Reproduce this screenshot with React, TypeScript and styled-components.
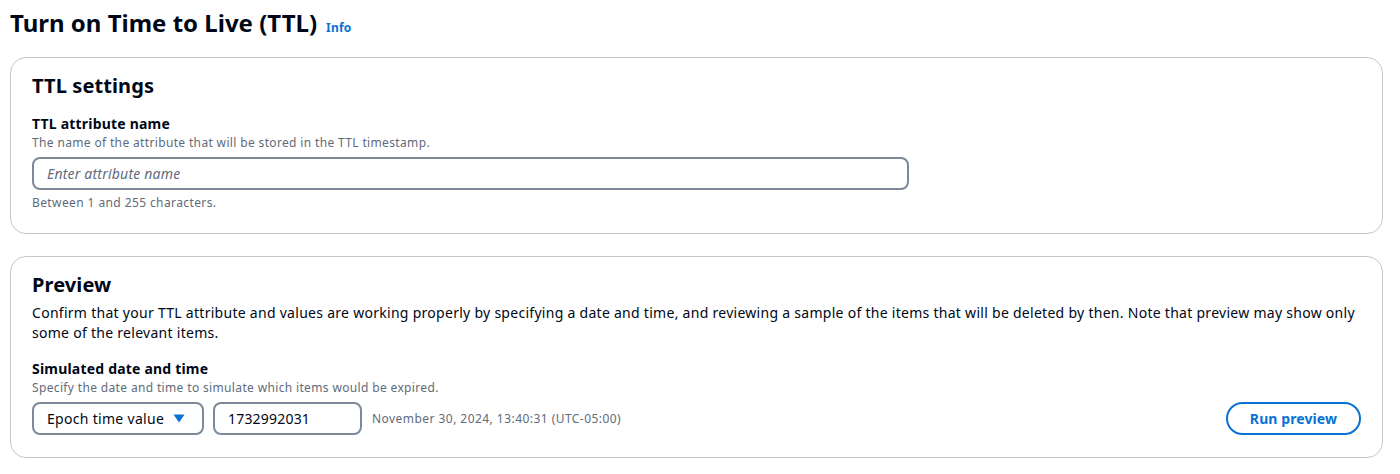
import React from 'react';
import styled, { createGlobalStyle } from 'styled-components';

const GlobalStyle = createGlobalStyle`
  html, body {
    margin: 0;
    padding: 0;
    background: #ffffff;
  }
  body {
    font-family: 'Noto Sans', 'Open Sans', Arial, sans-serif;
    color: #000716;
  }
`;

const Page = styled.div`
  width: 1373px;
  padding: 8px 17px 0 10px;
  display: flex;
  flex-direction: column;
  gap: 22px;
`;

const TitleRow = styled.div`
  display: flex;
  align-items: baseline;
  gap: 9px;
  height: 27px;
`;

const Title = styled.h1`
  margin: 0;
  font-size: 24px;
  line-height: 30px;
  font-weight: 700;
  color: #000716;
`;

const InfoLink = styled.a`
  font-size: 12px;
  font-weight: 700;
  color: #0972d3;
  text-decoration: none;
  letter-spacing: 0.2px;
`;

const Card = styled.section`
  border: 1px solid #c6c6cd;
  border-radius: 16px;
  padding: 16px 21px 22px;
  display: flex;
  flex-direction: column;
`;

const CardTitle = styled.h2`
  margin: 0 0 15px;
  font-size: 20px;
  line-height: 24px;
  font-weight: 700;
  letter-spacing: 0.1px;
`;

const CardText = styled.p`
  margin: -9px 0 15px;
  font-size: 14px;
  line-height: 20px;
  letter-spacing: 0.28px;
  color: #000716;
`;

const Field = styled.div`
  display: flex;
  flex-direction: column;
`;

const Label = styled.label`
  font-size: 14px;
  line-height: 22px;
  font-weight: 700;
  letter-spacing: 0.2px;
`;

const Hint = styled.div`
  font-size: 12px;
  line-height: 16px;
  color: #5f6b7a;
  letter-spacing: 0.35px;
  margin-bottom: 6px;
`;

const Constraint = styled.div`
  font-size: 12px;
  line-height: 16px;
  color: #5f6b7a;
  letter-spacing: 0.4px;
  margin-top: 5px;
`;

const TextInput = styled.input<{ $width: number }>`
  box-sizing: border-box;
  width: ${(p) => p.$width}px;
  height: 33px;
  border: 2px solid #7d8998;
  border-radius: 8px;
  padding: 0 13px;
  font-family: inherit;
  font-size: 14px;
  letter-spacing: 0.2px;
  color: #000716;
  outline: none;
  &::placeholder {
    color: #5f6b7a;
    font-style: italic;
  }
`;

const Controls = styled.div`
  display: flex;
  align-items: center;
`;

const SelectBox = styled.button`
  box-sizing: border-box;
  width: 172px;
  height: 33px;
  border: 2px solid #7d8998;
  border-radius: 8px;
  background: #fff;
  padding: 0 17px 0 13px;
  display: flex;
  align-items: center;
  justify-content: space-between;
  font-family: inherit;
  font-size: 14px;
  letter-spacing: 0.3px;
  color: #000716;
  cursor: pointer;
`;

const DateText = styled.span`
  margin-left: 10px;
  font-size: 12px;
  letter-spacing: 0.45px;
  color: #5f6b7a;
`;

const Spacer = styled.div`
  flex: 1;
`;

const PrimaryOutline = styled.button`
  box-sizing: border-box;
  width: 135px;
  height: 33px;
  border: 2px solid #0972d3;
  border-radius: 20px;
  background: #fff;
  color: #0972d3;
  font-family: inherit;
  font-size: 14px;
  font-weight: 700;
  letter-spacing: 0.1px;
  cursor: pointer;
`;

const Caret = () => (
  <svg width="12" height="9" viewBox="0 0 12 9">
    <path d="M0.5 0.5 L11.5 0.5 L6 8.5 Z" fill="#0972d3" />
  </svg>
);

const App: React.FC = () => {
  return (
    <>
      <GlobalStyle />
      <Page>
        <TitleRow>
          <Title>Turn on Time to Live (TTL)</Title>
          <InfoLink href="#">Info</InfoLink>
        </TitleRow>

        <Card>
          <CardTitle>TTL settings</CardTitle>
          <Field>
            <Label>TTL attribute name</Label>
            <Hint>The name of the attribute that will be stored in the TTL timestamp.</Hint>
            <TextInput $width={877} placeholder="Enter attribute name" />
            <Constraint>Between 1 and 255 characters.</Constraint>
          </Field>
        </Card>

        <Card>
          <CardTitle>Preview</CardTitle>
          <CardText>
            Confirm that your TTL attribute and values are working properly by specifying a date and time, and
            reviewing a sample of the items that will be deleted by then. Note that preview may show only some of
            the relevant items.
          </CardText>
          <Field>
            <Label>Simulated date and time</Label>
            <Hint>Specify the date and time to simulate which items would be expired.</Hint>
            <Controls>
              <SelectBox>
                <span>Epoch time value</span>
                <Caret />
              </SelectBox>
              <TextInput $width={149} defaultValue="1732992031" style={{ marginLeft: 9 }} />
              <DateText>November 30, 2024, 13:40:31 (UTC-05:00)</DateText>
              <Spacer />
              <PrimaryOutline>Run preview</PrimaryOutline>
            </Controls>
          </Field>
        </Card>
      </Page>
    </>
  );
};

export default App;
